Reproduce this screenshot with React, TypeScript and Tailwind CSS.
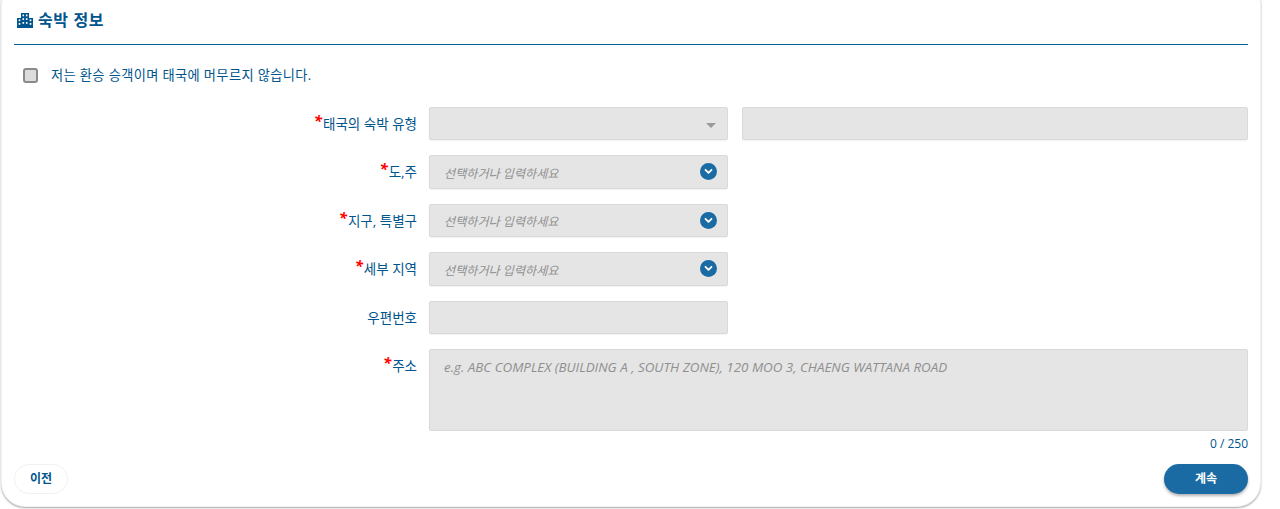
import React from "react";

function Building() {
  return (
    <svg width="16" height="15" viewBox="0 0 16 15" className="block" fill="#00558c">
      <path d="M4 0h8v5h4v10H0V5h4z" />
      <g fill="#ffffff">
        <rect x="5.5" y="1.5" width="1.6" height="1.8" />
        <rect x="8.9" y="1.5" width="1.6" height="1.8" />
        <rect x="1.7" y="6.4" width="1.6" height="1.8" />
        <rect x="5.5" y="5.2" width="1.6" height="1.8" />
        <rect x="8.9" y="5.2" width="1.6" height="1.8" />
        <rect x="12.7" y="6.4" width="1.6" height="1.8" />
        <rect x="1.7" y="10" width="1.6" height="1.8" />
        <rect x="5.5" y="9" width="1.6" height="1.8" />
        <rect x="8.9" y="9" width="1.6" height="1.8" />
        <rect x="12.7" y="10" width="1.6" height="1.8" />
      </g>
    </svg>
  );
}

function Label({ text, required = true }: { text: string; required?: boolean }) {
  return (
    <div className="w-[403px] shrink-0 flex justify-end text-[13.5px] leading-[18px] text-[#00558c] pt-[8px]">
      {required && <span className="text-[#f00] text-[15px] font-bold italic leading-[15px] -mt-[2px] mr-[1px]">*</span>}
      <span>{text}</span>
    </div>
  );
}

const boxCls = "h-[33.25px] bg-[#e5e5e5] border border-[#d9d9d9] rounded-[2px] shadow-[0_1px_1px_rgba(0,0,0,0.05)]";

function Combo() {
  return (
    <div className={`${boxCls} w-[299px] flex items-center justify-between pl-[14px] pr-[10px]`}>
      <span className="italic text-[12.1px] text-[#8f8f8f] pt-[4px]">선택하거나 입력하세요</span>
      <span className="w-[17px] h-[17px] rounded-full bg-[#1a6aa3] flex items-center justify-center">
        <svg width="9" height="7" viewBox="0 0 9 7" fill="none" stroke="#fff" strokeWidth="1.8" strokeLinecap="round" strokeLinejoin="round">
          <path d="M1.5 1.8 4.5 4.8 7.5 1.8" />
        </svg>
      </span>
    </div>
  );
}

export default function App() {
  return (
    <div className="w-[1280px] h-[509px] bg-white overflow-hidden font-['Open_Sans','Noto_Sans_CJK_KR',sans-serif]">
      <div className="w-[1260px] h-[527px] ml-[1px] -mt-[20px] pt-[20px] rounded-[24px] bg-white border border-[#f0f0f0] shadow-[0_1px_2px_rgba(0,0,0,0.35)] px-[12px] flex flex-col">
        <div className="border-b border-[#00629b] flex items-center pl-[3px] shrink-0 pb-[4px] -mt-[1px] h-[45px]">
          <Building />
          <span className="ml-[5px] text-[16px] tracking-[0.6px] font-bold text-[#00558c] leading-[20px]">숙박 정보</span>
        </div>

        <div className="flex items-center mt-[21px] pl-[9px] h-[18px]">
          <span className="w-[15px] h-[15px] rounded-[3px] bg-[#dcdcdc] border-2 border-[#8a8a8a]" />
          <span className="ml-[13px] pt-[1px] text-[13.2px] tracking-[0.38px] text-[#00558c]">저는 환승 승객이며 태국에 머무르지 않습니다.</span>
        </div>

        <div className="flex flex-col mt-[22.75px]">
          <div className="flex h-[48.5px]">
            <Label text="태국의 숙박 유형" />
            <div className="flex gap-[14px] ml-[12px]">
              <div className={`${boxCls} w-[299px] flex items-center justify-end pr-[11px]`}>
                <span className="w-0 h-0 mt-[5px] border-x-[5px] border-x-transparent border-t-[5px] border-t-[#9a9a9a]" />
              </div>
              <div className={`${boxCls} w-[506px]`} />
            </div>
          </div>
          <div className="flex h-[48.5px]">
            <Label text="도,주" />
            <div className="ml-[12px]"><Combo /></div>
          </div>
          <div className="flex h-[48.5px]">
            <Label text="지구, 특별구" />
            <div className="ml-[12px]"><Combo /></div>
          </div>
          <div className="flex h-[48.5px]">
            <Label text="세부 지역" />
            <div className="ml-[12px]"><Combo /></div>
          </div>
          <div className="flex h-[48.5px]">
            <Label text="우편번호" required={false} />
            <div className={`${boxCls} w-[299px] ml-[12px]`} />
          </div>
          <div className="flex">
            <Label text="주소" />
            <div className="ml-[12px] w-[819px]">
              <div className="h-[82px] bg-[#e5e5e5] border border-[#d9d9d9] rounded-[2px] pl-[14px] pt-[8px] italic text-[13.38px] leading-[18px] text-[#8f8f8f]">
                e.g. ABC COMPLEX (BUILDING A , SOUTH ZONE), 120 MOO 3, CHAENG WATTANA ROAD
              </div>
              <div className="text-right text-[12px] leading-[16px] mt-[5px] text-[#00558c]">0 / 250</div>
            </div>
          </div>
        </div>

        <div className="flex justify-between mt-[12px] w-[1234px]">
          <button className="w-[54px] h-[30px] rounded-full bg-white border border-[#f1f1f1] text-[12px] font-bold text-[#00558c]">이전</button>
          <button className="w-[84px] h-[30px] rounded-full bg-[#1a6aa3] shadow-[0_2px_3px_rgba(0,0,0,0.3)] text-[12px] font-bold text-white">계속</button>
        </div>
      </div>
    </div>
  );
}
